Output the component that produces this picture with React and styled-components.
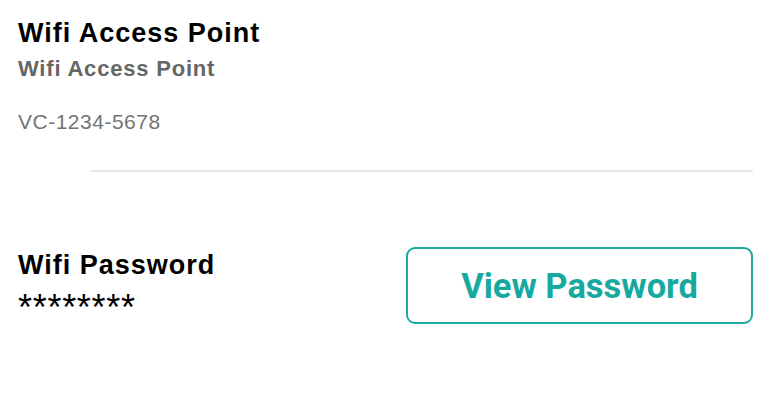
import React from "react";
import styled, { createGlobalStyle } from "styled-components";

const GlobalStyle = createGlobalStyle`
  body {
    margin: 0;
    background: #ffffff;
    font-family: "Liberation Sans", Arial, sans-serif;
  }
`;

const App = () => {
  return (
    <Wrapper>
      <GlobalStyle />
      <Header>
        <Title>Wifi Access Point</Title>
        <Subtitle>Wifi Access Point</Subtitle>
        <Serial>VC-1234-5678</Serial>
      </Header>
      <Divider />
      <PasswordRow>
        <PasswordInfo>
          <Title>Wifi Password</Title>
          <Masked>********</Masked>
        </PasswordInfo>
        <OutlineButton>View Password</OutlineButton>
      </PasswordRow>
    </Wrapper>
  );
};

const Wrapper = styled.div`
  display: flex;
  flex-direction: column;
  width: 774px;
  height: 405px;
  padding: 18px 21px 0 18px;
  box-sizing: border-box;
`;

const Header = styled.div`
  display: flex;
  flex-direction: column;
`;

const Title = styled.h2`
  margin: 0;
  font-size: 27px;
  font-weight: 700;
  letter-spacing: 1px;
  color: #000;
  line-height: 30px;
`;

const Subtitle = styled.p`
  margin: 8px 0 0;
  font-size: 22px;
  font-weight: 700;
  letter-spacing: 0.8px;
  color: #666;
  line-height: 26px;
`;

const Serial = styled.p`
  margin: 27px 0 0;
  font-size: 21px;
  font-weight: 400;
  letter-spacing: 0.5px;
  color: #747474;
  line-height: 26px;
`;

const Divider = styled.hr`
  margin: 35px 0 0 73px;
  border: none;
  height: 2px;
  background: #e8e8e8;
`;

const PasswordRow = styled.div`
  display: flex;
  justify-content: space-between;
  align-items: flex-start;
  margin-top: 75px;
`;

const PasswordInfo = styled.div`
  display: flex;
  flex-direction: column;
  padding-top: 3px;
`;

const Masked = styled.span`
  margin-top: 13px;
  font-size: 36px;
  letter-spacing: 0.7px;
  color: #000;
  line-height: 30px;
`;

const OutlineButton = styled.button`
  width: 347px;
  height: 77px;
  border: 2px solid #1aaaa0;
  border-radius: 9px;
  background: #fff;
  color: #17a99f;
  font-family: Roboto, sans-serif;
  font-weight: 700;
  font-size: 34.5px;
`;

export default App;
